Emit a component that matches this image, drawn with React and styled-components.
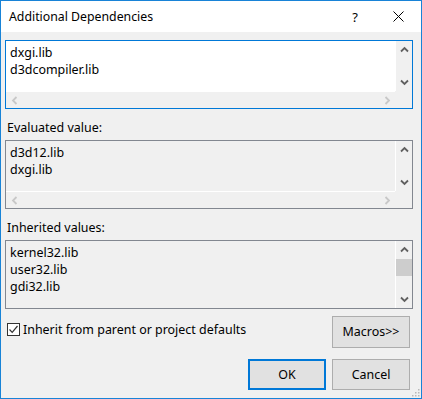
import React from "react";
import styled, { createGlobalStyle } from "styled-components";

const GlobalStyle = createGlobalStyle`
  html, body {
    margin: 0;
    padding: 0;
    background: #f0f0f0;
  }
  * {
    box-sizing: border-box;
  }
`;

const Window = styled.div`
  position: relative;
  width: 422px;
  height: 399px;
  border: 1px solid #1883d7;
  background: #f0f0f0;
  display: flex;
  flex-direction: column;
  font-family: "Noto Sans", "Liberation Sans", sans-serif;
  font-size: 12.45px;
  color: #000;
`;

const TitleBar = styled.div`
  height: 31px;
  background: #fff;
  display: flex;
  align-items: center;
`;

const Title = styled.div`
  flex: 1;
  padding-left: 8px;
  font-size: 12.3px;
  padding-bottom: 1px;
`;

const TitleButton = styled.div`
  width: ${({ w }) => w}px;
  height: 31px;
  display: flex;
  align-items: center;
  justify-content: center;
  font-size: 13px;
`;

const Body = styled.div`
  flex: 1;
  display: flex;
  flex-direction: column;
  padding: 8px 8px 0 4px;
`;

const Label = styled.div`
  height: 31px;
  display: flex;
  align-items: center;
  padding-left: 2px;
  padding-top: 6px;
`;

const Box = styled.div`
  height: 69px;
  border: 1px solid ${({ focused }) => (focused ? "#0078d7" : "#828790")};
  display: grid;
  grid-template-columns: 1fr 17px;
  grid-template-rows: ${({ hscroll }) => (hscroll ? "1fr 17px" : "1fr")};
  background: #f0f0f0;
`;

const TextArea = styled.div`
  background: ${({ editable }) => (editable ? "#fff" : "#f0f0f0")};
  padding: 3px 4px 0;
  line-height: 17px;
  overflow: hidden;
`;

const VScroll = styled.div`
  border-left: 1px solid #fff;
  display: flex;
  flex-direction: column;
  align-items: center;
  justify-content: space-between;
`;

const HScroll = styled.div`
  border-top: 1px solid #fff;
  display: flex;
  align-items: center;
  justify-content: space-between;
`;

const Corner = styled.div`
  background: #f0f0f0;
`;

const ArrowCell = styled.div`
  width: 16px;
  height: 17px;
  display: flex;
  align-items: center;
  justify-content: center;
`;

const Thumb = styled.div`
  width: 16px;
  height: 17px;
  background: #cdcdcd;
`;

const ThumbTrack = styled.div`
  flex: 1;
  width: 16px;
  padding-top: 1px;
`;

const Footer = styled.div`
  display: flex;
  flex-direction: column;
  padding: 7px 3px 0 2px;
`;

const Row = styled.div`
  display: flex;
  justify-content: ${({ end }) => (end ? "flex-end" : "space-between")};
  align-items: flex-start;
  gap: 6px;
  margin-top: ${({ mt }) => mt || 0}px;
`;

const CheckLabel = styled.label`
  display: flex;
  align-items: center;
  gap: 3px;
  margin-top: 5px;
`;

const CheckBox = styled.span`
  width: 13px;
  height: 13px;
  border: 1px solid #333;
  background: #fff;
  display: flex;
  align-items: center;
  justify-content: center;
`;

const Button = styled.div`
  width: 78px;
  height: ${({ h }) => h || 31}px;
  background: #e1e1e1;
  border: ${({ primary }) => (primary ? "2px solid #0078d7" : "1px solid #adadad")};
  display: flex;
  align-items: center;
  justify-content: center;
  padding-bottom: 1px;
`;

const Grip = styled.svg`
  position: absolute;
  right: 1px;
  bottom: 1px;
`;

const Chevron = ({ dir, color = "#606060" }) => {
  const paths = {
    up: "M1 5.5 L4.5 2 L8 5.5",
    down: "M1 1.5 L4.5 5 L8 1.5",
    left: "M5.5 1 L2 4.5 L5.5 8",
    right: "M1.5 1 L5 4.5 L1.5 8",
  };
  const vertical = dir === "up" || dir === "down";
  return (
    <svg width={vertical ? 9 : 7} height={vertical ? 7 : 9} viewBox={vertical ? "0 0 9 7" : "0 0 7 9"}>
      <path d={paths[dir]} fill="none" stroke={color} strokeWidth="1.8" />
    </svg>
  );
};

const ListBox = ({ lines, editable, focused, hscroll, thumb }) => (
  <Box focused={focused} hscroll={hscroll}>
    <TextArea editable={editable}>
      {lines.map((l) => (
        <div key={l}>{l}</div>
      ))}
    </TextArea>
    <VScroll>
      <ArrowCell>
        <Chevron dir="up" />
      </ArrowCell>
      {thumb && (
        <ThumbTrack>
          <Thumb />
        </ThumbTrack>
      )}
      <ArrowCell>
        <Chevron dir="down" />
      </ArrowCell>
    </VScroll>
    {hscroll && (
      <>
        <HScroll>
          <ArrowCell>
            <Chevron dir="left" color="#c8c8c8" />
          </ArrowCell>
          <ArrowCell>
            <Chevron dir="right" color="#c8c8c8" />
          </ArrowCell>
        </HScroll>
        <Corner />
      </>
    )}
  </Box>
);

export default function App() {
  return (
    <>
      <GlobalStyle />
      <Window>
        <TitleBar>
          <Title>Additional Dependencies</Title>
          <TitleButton w={40}>?</TitleButton>
          <TitleButton w={46}>
            <svg width="11" height="11" viewBox="0 0 11 11">
              <path d="M0.5 0.5 L10.5 10.5 M10.5 0.5 L0.5 10.5" stroke="#000" strokeWidth="1" />
            </svg>
          </TitleButton>
        </TitleBar>
        <Body>
          <ListBox lines={["dxgi.lib", "d3dcompiler.lib"]} editable focused hscroll />
          <Label>Evaluated value:</Label>
          <ListBox lines={["d3d12.lib", "dxgi.lib"]} hscroll />
          <Label>Inherited values:</Label>
          <ListBox lines={["kernel32.lib", "user32.lib", "gdi32.lib"]} thumb />
          <Footer>
            <Row>
              <CheckLabel>
                <CheckBox>
                  <svg width="11" height="11" viewBox="0 0 11 11">
                    <path d="M1.5 5.5 L4.2 8.3 L9.5 2" fill="none" stroke="#333" strokeWidth="1.2" />
                  </svg>
                </CheckBox>
                Inherit from parent or project defaults
              </CheckLabel>
              <Button h={32}>Macros&gt;&gt;</Button>
            </Row>
            <Row end mt={11}>
              <Button primary>OK</Button>
              <Button>Cancel</Button>
            </Row>
          </Footer>
        </Body>
        <Grip width="12" height="12" viewBox="0 0 12 12">
          {[
            [10, 4], [10, 7], [7, 7], [10, 10], [7, 10], [4, 10],
          ].map(([x, y]) => (
            <rect key={`${x}-${y}`} x={x} y={y} width="1.5" height="1.5" fill="#b8b8b8" />
          ))}
        </Grip>
      </Window>
    </>
  );
}
